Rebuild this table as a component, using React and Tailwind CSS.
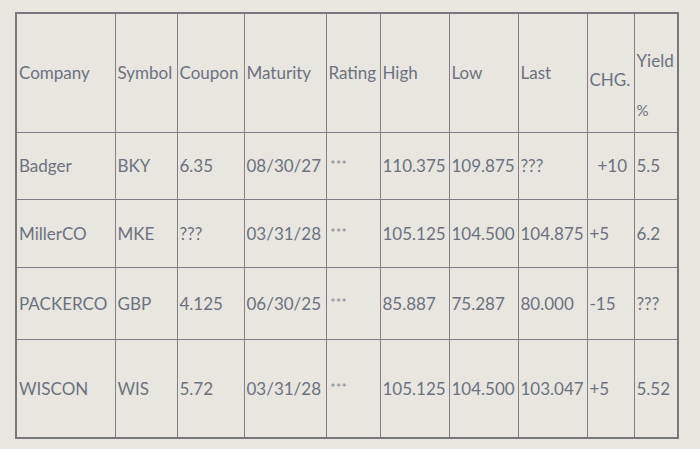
import React from 'react';

const COLS = [
  { key: 'company', label: 'Company', w: 'w-[99px]' },
  { key: 'symbol', label: 'Symbol', w: 'w-[62px]' },
  { key: 'coupon', label: 'Coupon', w: 'w-[67px]' },
  { key: 'maturity', label: 'Maturity', w: 'w-[82px]' },
  { key: 'rating', label: 'Rating', w: 'w-[54px]' },
  { key: 'high', label: 'High', w: 'w-[69px]' },
  { key: 'low', label: 'Low', w: 'w-[69px]' },
  { key: 'last', label: 'Last', w: 'w-[69px]' },
  { key: 'chg', label: 'CHG.', w: 'w-[47px]' },
  { key: 'yield', label: 'Yield', w: 'w-[42px]' },
];

const ROWS = [
  { h: 'h-[67px]', company: 'Badger', symbol: 'BKY', coupon: '6.35', maturity: '08/30/27', high: '110.375', low: '109.875', last: '???', chg: '+10', yield: '5.5' },
  { h: 'h-[68px]', company: 'MillerCO', symbol: 'MKE', coupon: '???', maturity: '03/31/28', high: '105.125', low: '104.500', last: '104.875', chg: '+5', yield: '6.2' },
  { h: 'h-[72px]', company: 'PACKERCO', symbol: 'GBP', coupon: '4.125', maturity: '06/30/25', high: '85.887', low: '75.287', last: '80.000', chg: '-15', yield: '???' },
  { h: 'h-[99px]', company: 'WISCON', symbol: 'WIS', coupon: '5.72', maturity: '03/31/28', high: '105.125', low: '104.500', last: '103.047', chg: '+5', yield: '5.52' },
];

const cell = 'border border-[#7f8187] px-[2px] align-middle text-left font-normal whitespace-nowrap overflow-hidden';

export default function App() {
  return (
    <div className="w-[700px] h-[449px] bg-[#e8e6de] pt-[12px] pl-[15px] text-[#6a7283] text-[17px] leading-none" style={{ fontFamily: 'Lato, "Open Sans", sans-serif' }}>
      <table className="table-fixed border-collapse border-2 border-[#77787d]">
        <thead>
          <tr className="h-[119px]">
            {COLS.map((c) =>
              c.key === 'yield' ? (
                <th key={c.key} className={`${cell} ${c.w} align-top`}>
                  <div className="flex flex-col items-end h-[115px] pt-[38px] pr-[1px]">
                    <span>Yield</span>
                    <span className="self-start mt-[34px] text-[15px]">%</span>
                  </div>
                </th>
              ) : (
                <th key={c.key} className={`${cell} ${c.w} ${c.key === 'chg' ? 'pt-[14px]' : ''}`}>
                  {c.label}
                </th>
              )
            )}
          </tr>
        </thead>
        <tbody>
          {ROWS.map((r) => (
            <tr key={r.company} className={r.h}>
              <td className={cell}>{r.company}</td>
              <td className={cell}>{r.symbol}</td>
              <td className={cell}>{r.coupon}</td>
              <td className={cell}>{r.maturity}</td>
              <td className={cell}>
                <span className="pl-[2px] text-[11px] font-bold tracking-[1px] text-[#9096a4] relative -top-[3px]">***</span>
              </td>
              <td className={cell}>{r.high}</td>
              <td className={cell}>{r.low}</td>
              <td className={cell}>{r.last}</td>
              <td className={`${cell} ${r.chg === '+10' ? 'pl-[10px]' : ''}`}>{r.chg}</td>
              <td className={cell}>{r.yield}</td>
            </tr>
          ))}
        </tbody>
      </table>
    </div>
  );
}
